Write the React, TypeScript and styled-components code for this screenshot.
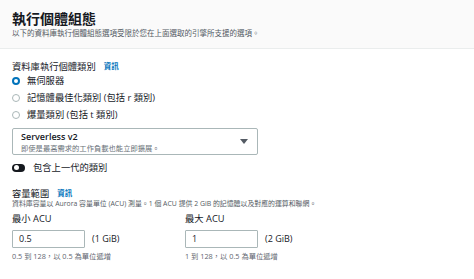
import React from "react";
import styled, { createGlobalStyle } from "styled-components";

const GlobalStyle = createGlobalStyle`
  html, body {
    margin: 0;
    padding: 0;
    background: #ffffff;
    font-family: "Open Sans", "Noto Sans CJK TC", sans-serif;
    color: #16191f;
  }
  * { box-sizing: border-box; }
`;

const Root = styled.div`
  width: 474px;
  height: 279px;
  overflow: hidden;
`;

const Header = styled.div`
  background: #fafafa;
  border-bottom: 1px solid #eaeded;
  padding: 9px 12px 9px;
  height: 49px;
`;

const Title = styled.h2`
  margin: 0;
  font-size: 14px;
  line-height: 20px;
  font-weight: 700;
  color: #16191f;
`;

const Subtitle = styled.div`
  font-size: 7.5px;
  line-height: 11px;
  color: #545b64;
  margin-top: -1px;
`;

const Body = styled.div`
  padding: 11px 12px 0;
`;

const Section = styled.div<{ $gap?: number }>`
  margin-top: ${(p) => p.$gap ?? 0}px;
`;

const Label = styled.div`
  display: flex;
  align-items: center;
  gap: 8px;
  font-size: 9.3px;
  line-height: 13px;
  color: #16191f;
`;

const InfoLink = styled.span`
  font-size: 7.5px;
  font-weight: 700;
  color: #0073bb;
`;

const RadioList = styled.div`
  display: flex;
  flex-direction: column;
  gap: 4px;
  margin-top: 1px;
`;

const RadioRow = styled.label`
  display: flex;
  align-items: center;
  gap: 7px;
  font-size: 9.3px;
  line-height: 13px;
`;

const RadioDot = styled.span<{ $checked?: boolean }>`
  width: 8px;
  height: 8px;
  border-radius: 50%;
  border: ${(p) => (p.$checked ? "2.5px solid #0073bb" : "1px solid #aab7b8")};
  background: #fff;
  flex: none;
`;

const Select = styled.div`
  margin-top: 7px;
  width: 246px;
  height: 27px;
  border: 1px solid #aab7b8;
  border-radius: 2px;
  display: flex;
  align-items: center;
  justify-content: space-between;
  padding: 0 9px 0 8px;
`;

const SelectText = styled.div`
  display: flex;
  flex-direction: column;
`;

const SelectMain = styled.span`
  font-size: 9px;
  line-height: 12px;
  font-weight: 600;
`;

const SelectSub = styled.span`
  font-size: 7.3px;
  line-height: 10px;
  color: #687078;
`;

const Caret = styled.span`
  width: 0;
  height: 0;
  border-left: 4px solid transparent;
  border-right: 4px solid transparent;
  border-top: 5px solid #545b64;
`;

const ToggleRow = styled.div`
  display: flex;
  align-items: center;
  gap: 8px;
  margin-top: 6px;
  font-size: 9.3px;
  line-height: 13px;
`;

const Toggle = styled.span`
  width: 13px;
  height: 8px;
  border-radius: 5px;
  background: #16191f;
  position: relative;
  flex: none;
  &::after {
    content: "";
    position: absolute;
    left: 1.5px;
    top: 1.5px;
    width: 5px;
    height: 5px;
    border-radius: 50%;
    background: #fff;
  }
`;

const Desc = styled.div`
  font-size: 6.9px;
  line-height: 10px;
  color: #545b64;
  margin-top: -1px;
`;

const Columns = styled.div`
  display: grid;
  grid-template-columns: 173px 173px;
  margin-top: 3.5px;
`;

const Field = styled.div`
  display: flex;
  flex-direction: column;
`;

const FieldLabel = styled.div`
  font-size: 9.3px;
  line-height: 13px;
  margin-bottom: 4.5px;
`;

const InputRow = styled.div`
  display: flex;
  align-items: center;
  gap: 7px;
`;

const Input = styled.div`
  width: 73px;
  height: 18px;
  border: 1px solid #aab7b8;
  border-radius: 1px;
  padding: 0 3px 0 6px;
  font-size: 9px;
  display: flex;
  align-items: center;
`;

const Unit = styled.span`
  font-size: 9px;
`;

const Hint = styled.div`
  font-size: 7.3px;
  line-height: 11px;
  color: #5f6670;
  margin-top: 3.5px;
`;

const App = () => {
  return (
    <Root>
      <GlobalStyle />
      <Header>
        <Title>執行個體組態</Title>
        <Subtitle>以下的資料庫執行個體組態選項受限於您在上面選取的引擎所支援的選項。</Subtitle>
      </Header>
      <Body>
        <Section>
          <Label>
            資料庫執行個體類別 <InfoLink>資訊</InfoLink>
          </Label>
          <RadioList>
            <RadioRow>
              <RadioDot $checked />
              無伺服器
            </RadioRow>
            <RadioRow>
              <RadioDot />
              記憶體最佳化類別 (包括 r 類別)
            </RadioRow>
            <RadioRow>
              <RadioDot />
              爆量類別 (包括 t 類別)
            </RadioRow>
          </RadioList>
          <Select>
            <SelectText>
              <SelectMain>Serverless v2</SelectMain>
              <SelectSub>即使是最高需求的工作負載也能立即擴展。</SelectSub>
            </SelectText>
            <Caret />
          </Select>
          <ToggleRow>
            <Toggle />
            包含上一代的類別
          </ToggleRow>
        </Section>
        <Section $gap={12.5}>
          <Label>
            容量範圍 <InfoLink>資訊</InfoLink>
          </Label>
          <Desc>資料庫容量以 Aurora 容量單位 (ACU) 測量。1 個 ACU 提供 2 GiB 的記憶體以及對應的運算和聯網。</Desc>
          <Columns>
            <Field>
              <FieldLabel>最小 ACU</FieldLabel>
              <InputRow>
                <Input>0.5</Input>
                <Unit>(1 GiB)</Unit>
              </InputRow>
              <Hint>0.5 到 128，以 0.5 為單位遞增</Hint>
            </Field>
            <Field>
              <FieldLabel>最大 ACU</FieldLabel>
              <InputRow>
                <Input>1</Input>
                <Unit>(2 GiB)</Unit>
              </InputRow>
              <Hint>1 到 128，以 0.5 為單位遞增</Hint>
            </Field>
          </Columns>
        </Section>
      </Body>
    </Root>
  );
};

export default App;
